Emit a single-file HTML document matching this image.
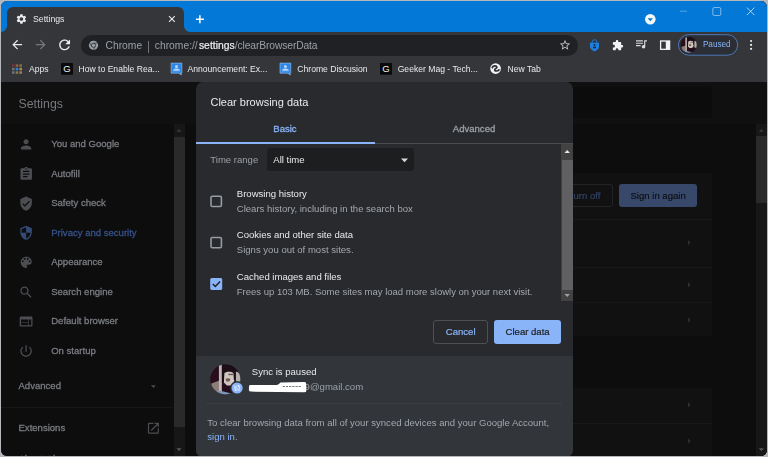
<!DOCTYPE html>
<html lang="en">
<head>
<meta charset="utf-8">
<title>Settings</title>
<style>
html,body{margin:0;padding:0;}
body{width:768px;height:457px;overflow:hidden;background:#b4b8bc;font-family:"Liberation Sans",sans-serif;position:relative;}
#win{position:absolute;left:1px;top:1px;width:766px;height:454.5px;border-radius:6px;overflow:hidden;background:#0d0d0e;}
.abs{position:absolute;}
.t{position:absolute;white-space:nowrap;line-height:12px;height:12px;}
.t{opacity:0.999;}
svg{position:absolute;left:0;top:0;overflow:visible;}
/* browser chrome */
#titlebar{position:absolute;left:0;top:0;width:766px;height:30.5px;background:#0378d6;}
#tab{position:absolute;left:6px;top:6px;width:177px;height:26px;background:#35363a;border-radius:6px 6px 0 0;}
#toolbar{position:absolute;left:0;top:30.5px;width:766px;height:50.7px;background:#35363a;}
#omni{position:absolute;left:79.500px;top:34px;width:497.300px;height:20.500px;border-radius:11px;background:#202124;}
.bm{font-size:8.6px;color:#e8eaed;top:61.600px;}
/* settings page (dimmed) */
#page{position:absolute;left:0;top:79px;width:766px;height:376px;background:#0d0d0e;}
.nav{font-size:9.550px;color:#797c80;-webkit-text-stroke:0.300px #797c80;left:50.2px;}
/* dialog */
#dlg{position:absolute;left:194.700px;top:81.200px;width:377.400px;height:375.300px;background:#292a2d;border-radius:7px;overflow:hidden;}
#dlgfoot{position:absolute;left:0;top:272.700px;width:378px;height:110px;background:#323539;}
.d1{font-size:9.55px;color:#e8eaed;left:41.5px;}
.d2{font-size:9.55px;color:#a3a8ae;left:41.5px;}
.med{-webkit-text-stroke:0.3px;}
.cb{position:absolute;left:15.200px;width:8.800px;height:8.800px;border:1.600px solid #979ca2;border-radius:1.6px;}
</style>
</head>
<body>
<div id="win">
  <div id="page">
    <!-- header -->
    <div class="abs" id="hdr" style="left:0;top:0;width:766px;height:43.5px;background:#101011;"></div>
    <div class="abs" id="search" style="left:384px;top:7px;width:327px;height:30.500px;background:#0c0c0d;border-radius:2px;"></div>
    <span class="t" id="settingsH" style="left:17.5px;top:18px;font-size:12.300px;color:#76797c;">Settings</span>
    <!-- sidebar -->
    <span class="t nav" id="n1" style="top:58px;">You and Google</span>
    <span class="t nav" id="n2" style="top:87.55px;">Autofill</span>
    <span class="t nav" id="n3" style="top:117.1px;">Safety check</span>
    <span class="t nav" id="n4" style="top:146.65px;color:#38528a;-webkit-text-stroke-color:#38528a;">Privacy and security</span>
    <span class="t nav" id="n5" style="top:176.2px;">Appearance</span>
    <span class="t nav" id="n6" style="top:205.75px;">Search engine</span>
    <span class="t nav" id="n7" style="top:235.3px;">Default browser</span>
    <span class="t nav" id="n8" style="top:264.85px;">On startup</span>
    <span class="t nav" id="n9" style="top:300.1px;left:17.5px;">Advanced</span>
    <div class="abs" style="left:0;top:326.5px;width:172px;height:1px;background:#171718;"></div>
    <span class="t nav" id="n10" style="top:341.8px;left:17.5px;">Extensions</span>
    <span class="t nav" id="n11" style="top:372.800px;left:17.5px;">About Chrome</span>
    <!-- sidebar scrollbar -->
    <div class="abs" style="left:172.5px;top:43.5px;width:11.5px;height:333px;background:#171717;"></div>
    <div class="abs" style="left:172.5px;top:56.5px;width:11.5px;height:290px;background:#2a2a2a;"></div>
    <!-- main scrollbar -->
    <div class="abs" style="left:754.5px;top:43.5px;width:12px;height:333px;background:#171717;"></div>
    <div class="abs" style="left:754.5px;top:56px;width:12px;height:67px;background:#2a2a2a;"></div>
    <!-- cards -->
    <div class="abs" id="card1" style="left:384px;top:92.5px;width:327px;height:163px;background:#111112;"></div>
    <div class="abs" id="card2" style="left:384px;top:308px;width:327px;height:80px;background:#111112;"></div>
    <div class="abs" style="left:384px;top:138.5px;width:327px;height:1px;background:#181819;"></div>
    <div class="abs" style="left:384px;top:187px;width:327px;height:1px;background:#181819;"></div>
    <div class="abs" style="left:384px;top:222px;width:327px;height:1px;background:#181819;"></div>
    <div class="abs" style="left:384px;top:343px;width:327px;height:1px;background:#181819;"></div>
    <div class="abs" id="turnoff" style="left:520px;top:103.5px;width:92px;height:23px;border:1px solid #232425;border-radius:3px;box-sizing:border-box;"></div>
    <span class="t med" id="turnofftxt" style="-webkit-text-stroke-width:0.150px;left:572.5px;top:109.5px;font-size:9.55px;color:#33456a;">urn off</span>
    <div class="abs" id="signin" style="left:617.5px;top:103.5px;width:78.5px;height:23px;background:#38486a;border-radius:3px;"></div>
    <span class="t med" id="signintxt" style="-webkit-text-stroke-width:0.150px;left:629.5px;top:109.5px;font-size:9.55px;color:#0d0e10;">Sign in again</span>
  </div>
  <div id="titlebar"></div>
  <div id="tab"></div>
  <div id="toolbar"></div>
  <div class="abs" style="left:0px;top:24.500px;width:6px;height:6px;background:radial-gradient(circle at 0 0,rgba(53,54,58,0) 5.500px,#35363a 6.200px);"></div>
  <div class="abs" style="left:183px;top:24.500px;width:6px;height:6px;background:radial-gradient(circle at 100% 0,rgba(53,54,58,0) 5.500px,#35363a 6.200px);"></div>
  <div id="omni"></div>

  <!-- tab -->
  <span class="t" id="tabtitle" style="left:32px;top:12px;font-size:8.7px;color:#e8eaed;">Settings</span>

  <!-- omnibox text -->
  <span class="t" id="omnitxt" style="left:104.5px;top:38.5px;font-size:10.3px;color:#9aa0a6;">Chrome<span style="color:#7e8388;margin:0 5px 0 5px;display:inline-block;transform:scaleY(1.250);">|</span>chrome://<span id="omniset" style="color:#eef0f2;margin-left:1.200px;-webkit-text-stroke:0.200px #eef0f2;letter-spacing:0.050px;">settings</span><span style="letter-spacing:-0.12px;">/clearBrowserData</span></span>

  <!-- bookmarks -->
  <span class="t bm" id="bm1" style="left:28px;">Apps</span>
  <span class="t bm" id="bm2" style="left:77.5px;">How to Enable Rea...</span>
  <span class="t bm" id="bm3" style="left:186.5px;">Announcement: Ex...</span>
  <span class="t bm" id="bm4" style="left:296.3px;">Chrome Discusion</span>
  <span class="t bm" id="bm5" style="left:396.7px;">Geeker Mag - Tech...</span>
  <span class="t bm" id="bm6" style="left:506.6px;">New Tab</span>


  <div id="dlg"><div class="abs" id="dlgin" style="left:-0.400px;top:0.800px;width:378px;height:375px;">
    <span class="t" id="dtitle" style="left:15.200px;top:12.700px;font-size:11px;color:#e8eaed;">Clear browsing data</span>
    <span class="t med" id="tbasic" style="left:78px;top:40px;font-size:9.55px;color:#8ab4f8;">Basic</span>
    <span class="t med" id="tadv" style="left:257.5px;top:40px;font-size:9.55px;color:#9aa0a6;">Advanced</span>
    <div class="abs" style="left:0;top:60.5px;width:378px;height:1px;background:#4a4c50;"></div>
    <div class="abs" style="left:0;top:59.5px;width:180px;height:2px;background:#8ab4f8;"></div>

    <span class="t" id="trange" style="left:15px;top:71.5px;font-size:9.55px;color:#9aa0a6;">Time range</span>
    <div class="abs" id="sel" style="left:71.700px;top:65px;width:147.300px;height:23.500px;background:#1d1e20;border-radius:3px;"></div>
    <span class="t" id="alltime" style="left:78px;top:71.5px;font-size:9.55px;color:#e8eaed;">All time</span>
    <span class="t d1" id="c1a" style="top:105.5px;">Browsing history</span>
    <span class="t d2" id="c1b" style="top:120px;">Clears history, including in the search box</span>
    <span class="t d1" id="c2a" style="top:146.5px;">Cookies and other site data</span>
    <span class="t d2" id="c2b" style="top:161.5px;">Signs you out of most sites.</span>
    <span class="t d1" id="c3a" style="top:188px;">Cached images and files</span>
    <span class="t d2" id="c3b" style="top:203px;font-size:9.500px;">Frees up 103 MB. Some sites may load more slowly on your next visit.</span>

    <!-- dialog scrollbar -->
    <div class="abs" style="left:365.700px;top:61.500px;width:12.300px;height:156.500px;background:#424242;"></div>
    <div class="abs" style="left:366.500px;top:77.400px;width:11px;height:129.600px;background:#606062;"></div>

    <!-- buttons -->
    <div class="abs" id="bcancel" style="left:238px;top:237px;width:54.5px;height:24px;border:1px solid #4c4f53;border-radius:3px;box-sizing:border-box;"></div>
    <span class="t med" id="bcanceltxt" style="-webkit-text-stroke-width:0.200px;left:250.5px;top:243.5px;font-size:9.55px;color:#8ab4f8;">Cancel</span>
    <div class="abs" id="bclear" style="left:298.5px;top:237px;width:67.5px;height:24px;background:#8ab4f8;border-radius:3px;"></div>
    <span class="t med" id="bcleartxt" style="-webkit-text-stroke-width:0.200px;left:310.3px;top:243.5px;font-size:9.55px;color:#202124;">Clear data</span>

    <div id="dlgfoot"></div>
    <!--AVATAR-->
    <span class="t" id="syncp" style="left:56.500px;top:282.900px;font-size:9.55px;color:#e8eaed;">Sync is paused</span>
    <span class="t" id="email" style="left:109.300px;top:298.200px;font-size:9.55px;color:#9aa0a6;">9@gmail.com</span>
    <div class="abs" style="left:12px;top:320.300px;width:354px;height:0;border-top:1px dotted #404347;"></div>
    <span class="t d2" id="f1" style="left:12px;top:334px;">To clear browsing data from all of your synced devices and your Google Account,</span>
    <span class="t d2" id="f2" style="left:12px;top:348.5px;"><span style="color:#8ab4f8;">sign in</span>.</span>
  </div></div>
<svg id="icons" width="768" height="457" viewBox="0 0 768 457" style="left:-1px;top:-1px;">
<path transform="translate(15.40,13.00) scale(0.5)" fill="#e8eaed" d="M19.14 12.94c.04-.3.06-.61.06-.94 0-.32-.02-.64-.07-.94l2.03-1.58c.18-.14.23-.41.12-.61l-1.92-3.32c-.12-.22-.37-.29-.59-.22l-2.39.96c-.5-.38-1.03-.7-1.62-.94l-.36-2.54c-.04-.24-.24-.41-.48-.41h-3.84c-.24 0-.43.17-.47.41l-.36 2.54c-.59.24-1.13.57-1.62.94l-2.39-.96c-.22-.08-.47 0-.59.22L2.74 8.87c-.12.21-.08.47.12.61l2.03 1.58c-.05.3-.09.63-.09.94s.02.64.07.94l-2.03 1.58c-.18.14-.23.41-.12.61l1.92 3.32c.12.22.37.29.59.22l2.39-.96c.5.38 1.03.7 1.62.94l.36 2.54c.05.24.24.41.48.41h3.84c.24 0 .44-.17.47-.41l.36-2.54c.59-.24 1.13-.56 1.62-.94l2.39.96c.22.08.47 0 .59-.22l1.92-3.32c.12-.22.07-.47-.12-.61l-2.01-1.58zM12 15.6c-1.98 0-3.6-1.62-3.6-3.6s1.62-3.6 3.6-3.6 3.6 1.62 3.6 3.6-1.62 3.6-3.6 3.6z"/>
<path d="M169 16.1l5.8 5.8M174.800 16.1l-5.800 5.800" stroke="#e8eaed" stroke-width="1.1" fill="none"/>
<path d="M195.900 19.300h8M199.900 15.300v8" stroke="#ffffff" stroke-width="1.5" fill="none"/>
<circle cx="650.300" cy="19.300" r="5.300" fill="#f4f6f8"/><path d="M647.600 18.200h5.400l-2.700 3z" fill="#0378d6"/>
<path d="M680 11.200h7" stroke="#ffffff" stroke-opacity="0.400" stroke-width="0.800"/>
<rect x="712.800" y="7.500" width="8" height="8" rx="1.500" fill="none" stroke="#ffffff" stroke-opacity="0.600" stroke-width="0.800"/>
<path d="M746.900 7.600l7.500 7.500M754.400 7.600l-7.500 7.500" stroke="#ffffff" stroke-opacity="0.850" stroke-width="0.800" fill="none"/>
<path transform="translate(9.88,37.38) scale(0.61)" fill="#e8eaed" d="M20 11H7.83l5.59-5.59L12 4l-8 8 8 8 1.41-1.41L7.83 13H20v-2z"/>
<path transform="translate(33.38,37.38) scale(0.61)" fill="#75787c" d="M12 4l-1.41 1.41L16.17 11H4v2h12.17l-5.58 5.59L12 20l8-8z"/>
<path transform="translate(56.44,36.74) scale(0.68)" fill="#e8eaed" d="M17.65 6.35C16.2 4.9 14.21 4 12 4c-4.42 0-7.99 3.58-7.99 8s3.57 8 7.99 8c3.73 0 6.84-2.55 7.73-6h-2.08c-.82 2.33-3.04 4-5.65 4-3.31 0-6-2.69-6-6s2.69-6 6-6c1.66 0 3.14.69 4.22 1.78L13 11h7V4l-2.35 2.35z"/>
<circle cx="93.500" cy="45.300" r="4.600" fill="#9aa0a6"/><circle cx="93.500" cy="45.300" r="2.100" fill="#9aa0a6" stroke="#202124" stroke-width="0.700"/><path d="M93.500 43.200h4M91.700 46.300l-2-3.500M95.300 46.400l-2 3.400" stroke="#202124" stroke-width="0.600"/>
<path transform="translate(558.76,38.76) scale(0.52)" fill="#c4c7c9" d="M22 9.24l-7.19-.62L12 2 9.19 8.63 2 9.24l5.46 4.73L5.82 21 12 17.27 18.18 21l-1.63-7.03L22 9.24zM12 15.4l-3.76 2.27 1-4.28-3.32-2.88 4.38-.38L12 6.1l1.71 4.04 4.38.38-3.32 2.88 1 4.28L12 15.4z"/>
<path d="M592.100 43.200v-1.100a2.400 2.400 0 0 1 4.800 0v1.100" fill="none" stroke="#1a7fe0" stroke-width="0.900"/>
<path d="M590 42.700h9v3.600c0 2.600-2 4.300-4.500 5.100c-2.500-.8-4.500-2.500-4.500-5.100z" fill="#1a7fe0"/>
<circle cx="594.500" cy="45" r="1" fill="#1b2a3d"/><path d="M592.900 48.300c0-1.200 .7-1.800 1.600-1.800s1.600 .6 1.600 1.800z" fill="#1b2a3d"/>
<path transform="translate(611.88,39.57) scale(0.49)" fill="#f1f3f4" d="M20.5 11H19V7c0-1.1-.9-2-2-2h-4V3.5C13 2.12 11.88 1 10.5 1S8 2.12 8 3.5V5H4c-1.1 0-1.99.9-1.99 2v3.8H3.5c1.49 0 2.7 1.21 2.7 2.7s-1.21 2.7-2.7 2.7H2V20c0 1.1.9 2 2 2h3.8v-1.5c0-1.49 1.21-2.7 2.7-2.7 1.49 0 2.7 1.21 2.7 2.7V22H17c1.1 0 2-.9 2-2v-4h1.5c1.38 0 2.5-1.12 2.5-2.5S21.88 11 20.5 11z"/>
<path transform="translate(634.25,36.86) scale(0.58)" fill="#d6d8da" d="M15 6H3v2h12V6zm0 4H3v2h12v-2zM3 16h8v-2H3v2zM17 6v8.18c-.31-.11-.65-.18-1-.18-1.66 0-3 1.34-3 3s1.34 3 3 3 3-1.34 3-3V8h3V6h-5z"/>
<rect x="660.600" y="41" width="9" height="8.300" fill="none" stroke="#f1f3f4" stroke-width="1.300"/><rect x="665.800" y="41" width="4" height="8.300" fill="#f1f3f4"/>
<circle cx="751.100" cy="41" r="1.100" fill="#e8eaed"/><circle cx="751.100" cy="44.900" r="1.100" fill="#e8eaed"/><circle cx="751.100" cy="48.800" r="1.100" fill="#e8eaed"/>
<rect x="678.500" y="34.700" width="59.200" height="20.500" rx="10.250" fill="#2b2e34" stroke="#4f79b8" stroke-width="1"/>
<defs><filter id="bl" x="-10%" y="-10%" width="120%" height="120%"><feGaussianBlur stdDeviation="0.75"/></filter><clipPath id="avc"><circle cx="0" cy="0" r="15"/></clipPath>
<g id="avg"><circle cx="0" cy="0" r="15" fill="#2a0d20"/><g clip-path="url(#avc)"><g filter="url(#bl)">
<rect x="-16" y="-16" width="10" height="20" fill="#2b0a1f"/>
<path d="M-14 4l8-3v15h-10z" fill="#8d7d76"/>
<rect x="-6.500" y="-16" width="3" height="32" fill="#bdb8b3"/>
<path d="M-3.500-15h15l3 9v9l-4 2l-14-2z" fill="#1c0b19"/>
<path d="M-1-6.500c3-2 7-1.500 9 0l.5 7l-3 5.500h-4l-3-3z" fill="#cfc6bd"/>
<path d="M3-5.800h5v1.500h-5z" fill="#6e5a5c"/><path d="M0-0.500c2-1 3.500-1 5 0l-1 2.500h-3z" fill="#705856"/><path d="M6 0l3 .5l-1 4l-3 1z" fill="#d8cfc6"/>
<path d="M10.500-8l5 2v12l-5-1z" fill="#b5b0ab"/>
<path d="M-3.500 5l5 2l6-1l4 3v8h-15z" fill="#26101f"/>
<path d="M-8 11l6 1l8 2v3h-14z" fill="#7f95b5"/>
</g></g></g></defs>
<use href="#avg" transform="translate(225.400,379.500)"/>
<use href="#avg" transform="translate(688.800,44.900) scale(0.530)"/>
<circle cx="237.100" cy="388" r="7" fill="#323539"/><circle cx="237.100" cy="388" r="5.600" fill="#8ab4f8"/>
<path transform="translate(233.02,383.92) scale(0.34)" fill="#ffffff" d="M10 6.350V4.260c-.8.210-1.550.540-2.230.960l1.460 1.460c.250-.120.500-.240.770-.330zm-7.140-.940l2.360 2.360C4.450 8.990 4 10.440 4 12c0 2.210.910 4.200 2.360 5.640L4 20h6v-6l-2.240 2.240C6.680 15.150 6 13.660 6 12c0-1 .250-1.940.680-2.770l8.080 8.080c-.250.130-.5.250-.770.340v2.090c.8-.210 1.550-.540 2.230-.960l2.360 2.360 1.270-1.270L4.140 4.140 2.860 5.410zM20 4h-6v6l2.240-2.240C17.320 8.850 18 10.340 18 12c0 1-.250 1.940-.680 2.770l1.460 1.460C19.550 15.010 20 13.560 20 12c0-2.210-.910-4.200-2.360-5.640L20 4z"/>
<path d="M249 386.500Q248.900 384.900 251 384.900L277 385Q279 384.300 280.500 382.400L304.500 382.100Q306.300 382.200 306.200 384L306.300 391Q306.200 392.300 304 392.200L279 392L251 391.600Q248.800 391.500 248.900 389.500Z" fill="#ffffff"/>
<path d="M282.700 386.500h18.500" stroke="#60656b" stroke-width="0.900" stroke-dasharray="2.200 1"/>
<rect x="12.00" y="64.30" width="2.600" height="2.500" fill="#7a2f3a"/>
<rect x="15.70" y="64.30" width="2.600" height="2.500" fill="#8a6a3a"/>
<rect x="19.40" y="64.30" width="2.600" height="2.500" fill="#8a6a4a"/>
<rect x="12.00" y="67.80" width="2.600" height="2.500" fill="#6d7378"/>
<rect x="15.70" y="67.80" width="2.600" height="2.500" fill="#2f7fd6"/>
<rect x="19.40" y="67.80" width="2.600" height="2.500" fill="#b08a50"/>
<rect x="12.00" y="71.30" width="2.600" height="2.500" fill="#6d7378"/>
<rect x="15.70" y="71.30" width="2.600" height="2.500" fill="#8a7a50"/>
<rect x="19.40" y="71.30" width="2.600" height="2.500" fill="#a07a50"/>
<rect x="61" y="63" width="12" height="11.700" rx="0.800" fill="#0a0a0a"/>
<rect x="380" y="63" width="12" height="11.700" rx="0.800" fill="#0a0a0a"/>
<text x="67" y="72.300" font-family="Liberation Sans, sans-serif" font-size="9.500" fill="#f1f3f4" text-anchor="middle">G</text>
<text x="386" y="72.300" font-family="Liberation Sans, sans-serif" font-size="9.500" fill="#f1f3f4" text-anchor="middle">G</text>
<path d="M171.1 63.100h10.800v10.100h-1.500l1.300 1.700l-3.400-1.700h-7.200z" fill="#2a86e8" stroke="#b9d2f2" stroke-width="0.500"/>
<path d="M172.9 71.200c0-2.300 1.600-3 3.600-3s3.600.7 3.600 3z" fill="#8dbcf3"/><circle cx="176.5" cy="66.600" r="1.500" fill="#b9d6f8"/><path d="M174.4 69.600h4.200" stroke="#e6f0fc" stroke-width="0.700"/>
<path d="M280 63.100h10.800v10.100h-1.500l1.300 1.700l-3.400-1.700h-7.200z" fill="#2a86e8" stroke="#b9d2f2" stroke-width="0.500"/>
<path d="M281.8 71.200c0-2.300 1.600-3 3.600-3s3.600.7 3.600 3z" fill="#8dbcf3"/><circle cx="285.4" cy="66.600" r="1.500" fill="#b9d6f8"/><path d="M283.3 69.600h4.200" stroke="#e6f0fc" stroke-width="0.700"/>
<circle cx="495.600" cy="68.600" r="5.300" fill="#f1f3f4"/><path d="M492.300 67.600c.8-2.300 4.300-2.200 4.600-.4c.2 1.400-1.900 1.300-2.200 2.500c-.3 1.400 2.600 2 4.300.200" fill="none" stroke="#2c2d30" stroke-width="1.700" stroke-linecap="round"/>
<path transform="translate(18.42,136.62) scale(0.64)" fill="#4b4d51" d="M12 12c2.21 0 4-1.79 4-4s-1.79-4-4-4-4 1.79-4 4 1.79 4 4 4zm0 2c-2.67 0-8 1.34-8 4v2h16v-2c0-2.66-5.33-4-8-4z"/>
<path transform="translate(18.52,166.36) scale(0.64)" fill="#4b4d51" d="M19 3h-4.18C14.4 1.84 13.3 1 12 1c-1.3 0-2.4.84-2.82 2H5c-1.1 0-2 .9-2 2v14c0 1.1.9 2 2 2h14c1.1 0 2-.9 2-2V5c0-1.1-.9-2-2-2zm-7 0c.55 0 1 .45 1 1s-.45 1-1 1-1-.45-1-1 .45-1 1-1zm2 14H7v-2h7v2zm3-4H7v-2h10v2zm0-4H7V7h10v2z"/>
<path transform="translate(18.42,195.92) scale(0.64)" fill="#4b4d51" d="M12 1L3 5v6c0 5.55 3.84 10.74 9 12 5.16-1.26 9-6.45 9-12V5l-9-4zm-2 16l-4-4 1.41-1.41L10 14.17l6.59-6.59L18 9l-8 8z"/>
<path transform="translate(18.42,225.12) scale(0.64)" fill="#324a75" d="M12 1L3 5v6c0 5.55 3.84 10.74 9 12 5.16-1.26 9-6.45 9-12V5l-9-4zm0 10.99h7c-.53 4.12-3.28 7.79-7 8.94V12H5V6.3l7-3.11v8.8z"/>
<path transform="translate(18.76,254.86) scale(0.62)" fill="#4b4d51" d="M12 3c-4.97 0-9 4.03-9 9s4.03 9 9 9c.83 0 1.5-.67 1.5-1.5 0-.39-.15-.74-.39-1.01-.23-.26-.38-.61-.38-.99 0-.83.67-1.5 1.5-1.5H16c2.76 0 5-2.24 5-5 0-4.42-4.03-8-9-8zm-5.5 9c-.83 0-1.5-.67-1.5-1.5S5.67 9 6.5 9 8 9.67 8 10.5 7.33 12 6.5 12zm3-4C8.67 8 8 7.33 8 6.5S8.67 5 9.5 5s1.500.67 1.500 1.500S10.33 8 9.5 8zm5 0c-.83 0-1.5-.67-1.5-1.5S13.67 5 14.5 5s1.500.67 1.500 1.500S15.33 8 14.5 8zm3 4c-.83 0-1.5-.67-1.5-1.5S16.67 9 17.5 9s1.500.67 1.500 1.500-.67 1.500-1.500 1.500z"/>
<path transform="translate(18.42,284.62) scale(0.64)" fill="#4b4d51" d="M15.5 14h-.79l-.28-.27C15.41 12.59 16 11.11 16 9.5 16 5.91 13.09 3 9.5 3S3 5.91 3 9.5 5.91 16 9.5 16c1.61 0 3.09-.59 4.23-1.57l.27.28v.79l5 4.990L20.490 19l-4.990-5zm-6 0C7.01 14 5 11.99 5 9.5S7.01 5 9.5 5 14 7.01 14 9.5 11.99 14 9.5 14z"/>
<path transform="translate(18.42,313.82) scale(0.64)" fill="#4b4d51" d="M20 4H4c-1.1 0-1.99.9-1.99 2L2 18c0 1.1.9 2 2 2h16c1.1 0 2-.9 2-2V6c0-1.1-.9-2-2-2zm-5 14H4v-4h11v4zm0-5H4V9h11v4zm5 5h-4V9h4v9z"/>
<path transform="translate(18.42,343.32) scale(0.64)" fill="#4b4d51" d="M13 3h-2v10h2V3zm4.830 2.170l-1.420 1.420C17.990 7.860 19 9.810 19 12c0 3.870-3.130 7-7 7s-7-3.130-7-7c0-2.190 1.010-4.140 2.580-5.420L6.170 5.170C4.230 6.820 3 9.260 3 12c0 4.970 4.030 9 9 9s9-4.030 9-9c0-2.740-1.230-5.180-3.170-6.830z"/>
<path d="M150.900 385.300h5l-2.500 2.800z" fill="#4b4d51"/>
<path transform="translate(146.08,420.98) scale(0.61)" fill="#4b4d51" d="M19 19H5V5h7V3H5c-1.110 0-2 .9-2 2v14c0 1.100.890 2 2 2h14c1.100 0 2-.9 2-2v-7h-2v7zM14 3v2h3.590l-9.830 9.830 1.410 1.410L19 6.410V10h2V3h-7z"/>
<path d="M176.500 131.800l2.500-2.800l2.500 2.800z" fill="#3a3a3a"/><path d="M176.500 448.300l2.500 2.800l2.500-2.800z" fill="#5a5a5a"/>
<path d="M758.800 131.800l2.500-2.800l2.500 2.800z" fill="#3a3a3a"/><path d="M758.800 448.300l2.500 2.800l2.500-2.800z" fill="#5a5a5a"/>
<path d="M564.500 153l2.700-3l2.700 3z" fill="#e8e8e8"/><path d="M564.500 294l2.700 3l2.700-3z" fill="#a0a0a0"/>
<path d="M688 239.9l2.600 2.700l-2.600 2.700z" fill="#2e2f31"/>
<path d="M688 282.1l2.600 2.700l-2.600 2.700z" fill="#2e2f31"/>
<path d="M688 317.3l2.600 2.700l-2.600 2.700z" fill="#2e2f31"/>
<path d="M688 402.0l2.600 2.700l-2.600 2.700z" fill="#2e2f31"/>
<path d="M688 438.3l2.600 2.700l-2.600 2.700z" fill="#2e2f31"/>
<path d="M401 158.500h7l-3.500 3.800z" fill="#d5d7da"/>
<rect x="211" y="196.20" width="10.400" height="10.300" rx="1.300" fill="none" stroke="#979ca2" stroke-width="1.600"/>
<rect x="211" y="237.50" width="10.400" height="10.300" rx="1.300" fill="none" stroke="#979ca2" stroke-width="1.600"/>
<rect x="210.200" y="278" width="12" height="11.900" rx="1.600" fill="#8ab4f8"/>
<path d="M212.800 284l2.500 2.500l4.800-5" fill="none" stroke="#202124" stroke-width="1.500"/>
</svg>
  <span class="t" id="paused" style="left:701.900px;top:38.400px;font-size:8.200px;color:#8ab4f8;">Paused</span>
</div>
</body>
</html>
